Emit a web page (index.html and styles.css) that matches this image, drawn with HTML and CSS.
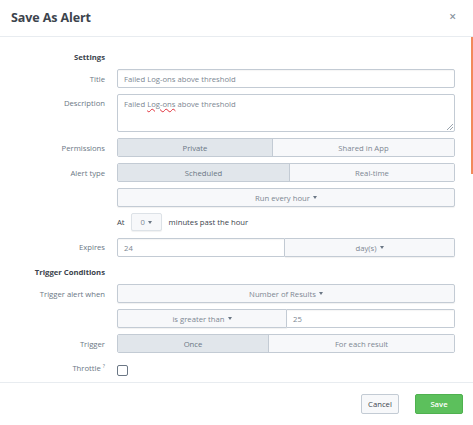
FILE: index.html
```html
<!DOCTYPE html>
<html>
<head>
<meta charset="utf-8">
<link rel="stylesheet" href="styles.css">
</head>
<body>
<div class="modal">
  <div class="header">
    <div class="title">Save As Alert</div>
    <div class="close">×</div>
  </div>
  <div class="body">
    <div class="scroll"></div>
    <div class="form">
      <div class="label heading">Settings</div><div></div>
      <div class="label">Title</div>
      <div class="input">Failed Log-ons above threshold</div>
      <div class="label top">Description</div>
      <div class="textarea">Failed <span class="spell">Log-ons</span> above threshold<span class="grip"></span></div>
      <div class="label">Permissions</div>
      <div class="toggle perm"><div class="opt active">Private</div><div class="opt">Shared in App</div></div>
      <div class="label">Alert type</div>
      <div class="toggle atype"><div class="opt active">Scheduled</div><div class="opt">Real-time</div></div>
      <div></div>
      <div class="select">Run every hour <span class="caret"></span></div>
      <div></div>
      <div class="atrow"><span>At</span><div class="minbtn">0 <span class="caret"></span></div><span class="past">minutes past the hour</span></div>
      <div class="label">Expires</div>
      <div class="split expires"><div class="input part">24</div><div class="select part">day(s) <span class="caret"></span></div></div>
      <div class="label heading h2">Trigger Conditions</div><div></div>
      <div class="label">Trigger alert when</div>
      <div class="select">Number of Results <span class="caret"></span></div>
      <div></div>
      <div class="split cmp"><div class="select part">is greater than <span class="caret"></span></div><div class="input part">25</div></div>
      <div class="label">Trigger</div>
      <div class="toggle trig"><div class="opt active">Once</div><div class="opt">For each result</div></div>
      <div class="label">Throttle <sup class="q">?</sup></div>
      <div class="chkrow"><span class="chk"></span></div>
    </div>
  </div>
  <div class="footer">
    <button class="btn cancel">Cancel</button>
    <button class="btn save">Save</button>
  </div>
</div>
</body>
</html>
```
FILE: styles.css
```css
* { box-sizing: border-box; }
html, body { margin: 0; padding: 0; background: #fff; }
body { font-family: "Open Sans", "Liberation Sans", sans-serif; font-size: 7.7px; color: #6b7785; width: 473px; height: 425px; overflow: hidden; }
.modal { width: 473px; height: 425px; position: relative; }
.header { height: 37px; border-bottom: 1px solid #e8ecf0; display: flex; align-items: center; justify-content: space-between; padding: 0 17px 2px 11px; }
.title { font-size: 12.5px; font-weight: 700; color: #3c444d; letter-spacing: -0.1px; }
.close { font-size: 12px; color: #8a949e; font-weight: 600; line-height: 1; }
.body { position: relative; height: 345px; padding-top: 13px; }
.scroll { position: absolute; right: 0; top: 0; width: 2px; height: 137px; background: #f28a5b; }
.form { display: grid; grid-template-columns: 105px 338px; column-gap: 12px; row-gap: 6px; }
.label { display: flex; align-items: center; justify-content: flex-end; min-height: 13px; color: #6b7785; white-space: nowrap; }
.label.top { align-items: flex-start; padding-top: 4px; }
.label.heading { font-weight: 700; color: #3c444d; }
.label.h2 { min-height: 15px; padding-top: 3px; }
.input, .select, .textarea, .toggle, .split { height: 19px; }
.input { border: 1px solid #c3cbd4; border-radius: 2px; background: #fff; display: flex; align-items: center; padding: 0 6px; color: #7d8793; box-shadow: inset 0 1px 1px rgba(0,0,0,0.04); }
.textarea { position: relative; height: 38px; border: 1px solid #c3cbd4; border-radius: 2px; padding: 4px 6px; color: #7d8793; }
.spell { text-decoration: underline wavy #e0303a; text-decoration-thickness: 1px; text-underline-offset: 1px; }
.grip { position: absolute; right: 1px; bottom: 1px; width: 6px; height: 6px; background: linear-gradient(135deg, transparent 45%, #9aa4ae 45%, #9aa4ae 55%, transparent 55%, transparent 70%, #9aa4ae 70%, #9aa4ae 80%, transparent 80%); }
.select { border: 1px solid #c3cbd4; border-radius: 2px; background: #f7f8fa; display: flex; align-items: center; justify-content: center; color: #7d8793; box-shadow: 0 1px 1px rgba(0,0,0,0.06); }
.caret { display: inline-block; width: 0; height: 0; border-left: 2.5px solid transparent; border-right: 2.5px solid transparent; border-top: 3px solid #6b7785; margin-left: 3px; vertical-align: middle; }
.toggle { display: flex; border: 1px solid #c3cbd4; border-radius: 2px; overflow: hidden; }
.opt { flex: 1; display: flex; align-items: center; justify-content: center; background: #f7f8fa; color: #7d8793; }
.opt.active { background: #e1e6eb; border-right: 1px solid #c3cbd4; color: #6b7785; }
.perm .opt.active { flex: 0 0 155px; }
.atype .opt.active { flex: 0 0 172px; }
.trig .opt.active { flex: 0 0 151px; }
.split { display: flex; }
.split .part { height: 19px; }
.expires .input { flex: 0 0 168px; border-radius: 2px 0 0 2px; }
.expires .select { flex: 1; border-left: none; border-radius: 0 2px 2px 0; }
.cmp .select { flex: 0 0 170px; border-radius: 2px 0 0 2px; }
.cmp .input { flex: 1; border-left: none; border-radius: 0 2px 2px 0; }
.atrow { display: flex; align-items: center; height: 18px; color: #3c444d; margin-top: 0; }
.minbtn { width: 31px; height: 18px; margin: 0 7px 0 6px; border: 1px solid #dde2e7; border-radius: 2px; background: #f7f8fa; display: flex; align-items: center; justify-content: center; color: #7d8793; box-shadow: 0 1px 1px rgba(0,0,0,0.06); }
.past { color: #3c444d; }
.expires { margin-top: 1px; }
.q { font-size: 5px; color: #6b7785; margin-left: 2px; position: relative; top: -2px; }
.chkrow { height: 18px; display: flex; align-items: center; padding-top: 4px; }
.chk { width: 11px; height: 11px; border: 1px solid #6b7785; border-radius: 2px; background: #fff; }
.footer { position: absolute; left: 0; right: 0; top: 382px; height: 43px; border-top: 1px solid #e8ecf0; display: flex; justify-content: flex-end; align-items: flex-start; padding: 11px 10px 0 0; gap: 16px; }
.btn { font-family: inherit; font-size: 7.7px; height: 20px; border-radius: 2px; padding: 0; cursor: default; }
.cancel { width: 38px; background: #f7f8fa; border: 1px solid #c3cbd4; color: #3c444d; }
.save { width: 48px; background: #5cc05c; border: 1px solid #4fb14f; color: #fff; font-weight: 600; }
```
